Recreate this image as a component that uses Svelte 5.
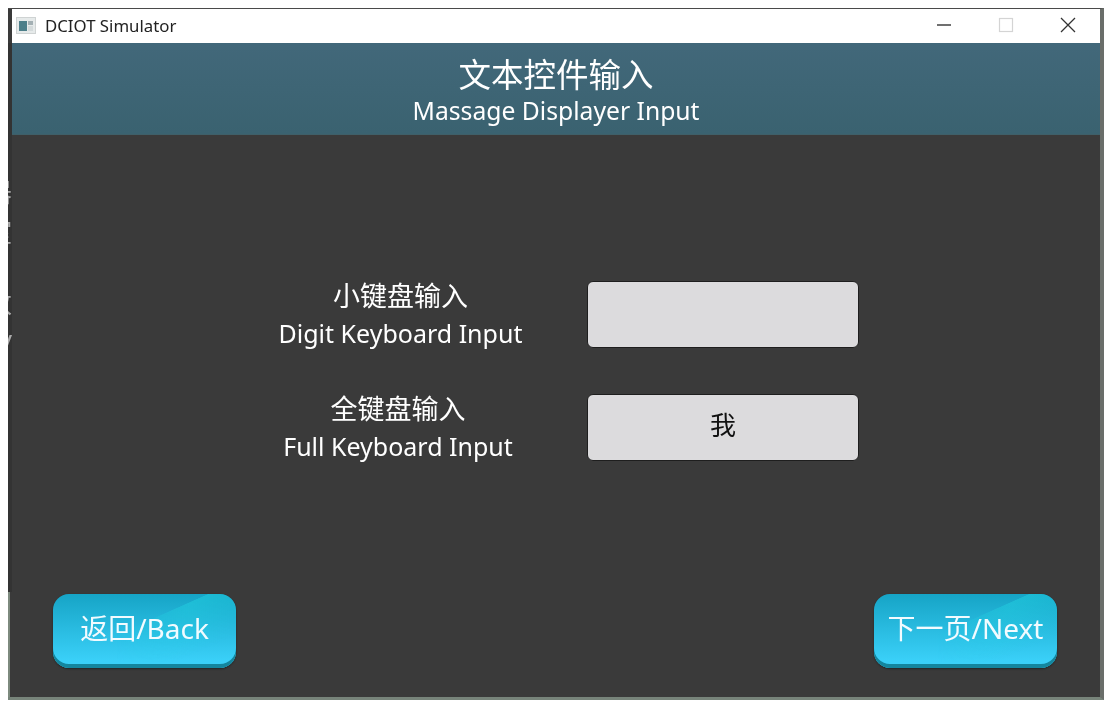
<script>
  const rows = [
    { zh: '小键盘输入', en: 'Digit Keyboard Input', value: '', cls: 'digit' },
    { zh: '全键盘输入', en: 'Full Keyboard Input', value: '我', cls: 'full' }
  ]
</script>

<div class="window">
  <div class="titlebar">
    <svg class="appicon" width="20" height="17" viewBox="0 0 20 17">
      <rect x="0.5" y="0.5" width="19" height="16" fill="#e6eaea" stroke="#cfd3d3" />
      <rect x="3" y="4" width="8" height="10" fill="#4d7f8a" />
      <rect x="12" y="4" width="5" height="4" fill="#a4b0b4" />
      <rect x="12" y="9" width="5" height="5" fill="#d4dadb" />
    </svg>
    <span class="apptitle">DCIOT Simulator</span>
    <div class="winbtns">
      <svg class="winbtn" width="16" height="16" viewBox="0 0 16 16"><path d="M1 8h14" stroke="#333" stroke-width="1.4" /></svg>
      <svg class="winbtn" width="16" height="16" viewBox="0 0 16 16"><rect x="1.5" y="1.5" width="13" height="13" fill="none" stroke="#d4d4d4" stroke-width="1.2" /></svg>
      <svg class="winbtn" width="16" height="16" viewBox="0 0 16 16"><path d="M1 1l14 14M15 1L1 15" stroke="#333" stroke-width="1.3" /></svg>
    </div>
  </div>

  <div class="body">
    <div class="ghost" aria-hidden="true">
      <span class="g1">器</span>
      <span class="g2">室</span>
      <span class="g3">数</span>
      <span class="g4">y</span>
    </div>
    <div class="edge"></div>

    <header class="header">
      <div class="h-zh">文本控件输入</div>
      <div class="h-en">Massage Displayer Input</div>
    </header>

    <main class="content">
      <div class="form">
        {#each rows as row}
          <div class="label {row.cls}">
            <div class="l-zh">{row.zh}</div>
            <div class="l-en">{row.en}</div>
          </div>
          <div class="field">{row.value}</div>
        {/each}
      </div>

      <div class="actions">
        <button class="btn">返回/Back</button>
        <button class="btn next">下一页/Next</button>
      </div>
    </main>
  </div>
</div>

<style>
  :global(body) {
    margin: 0;
    background: #fff;
  }

  .window {
    width: 1096px;
    height: 692px;
    margin: 8px 0 0 8px;
    display: flex;
    flex-direction: column;
    box-sizing: border-box;
    border-top: 1px solid #4a4a4a;
    border-right: 4px solid #6a6e6a;
    border-bottom: 3px solid #77847a;
    background: #3a3a3a;
    font-family: "Noto Sans", "Noto Sans CJK SC", sans-serif;
    color: #fff;
    filter: blur(0.4px);
  }

  .titlebar {
    height: 34px;
    margin-left: 4px;
    flex-shrink: 0;
    display: flex;
    align-items: center;
    background: #fff;
    color: #222;
    padding: 0 0 2px 4px;
    box-sizing: border-box;
  }

  .appicon {
    flex-shrink: 0;
  }

  .apptitle {
    margin-left: 9px;
    font-size: 16.8px;
  }

  .winbtns {
    margin-left: auto;
    display: flex;
    gap: 46px;
    padding-right: 24px;
  }

  .body {
    flex: 1;
    position: relative;
    display: flex;
    flex-direction: column;
    min-height: 0;
  }

  .ghost {
    position: absolute;
    left: 0;
    top: 0;
    bottom: 105px;
    width: 4px;
    overflow: hidden;
    background: #333;
    color: #aaa;
    font-size: 26px;
    line-height: 1;
  }

  .ghost span {
    position: absolute;
    right: 0;
  }

  .g1 { top: 136px; }
  .g2 { top: 176px; }
  .g3 { top: 247px; }
  .g4 { top: 283px; }

  .edge {
    position: absolute;
    left: 0;
    bottom: 0;
    height: 105px;
    width: 2px;
    background: #7d8a7e;
  }

  .header {
    height: 92px;
    margin-left: 4px;
    flex-shrink: 0;
    display: flex;
    flex-direction: column;
    align-items: center;
    padding-top: 12px;
    box-sizing: border-box;
    background: linear-gradient(#42687a, #3a6270);
    border-bottom: 1px solid #3f5f68;
  }

  .h-zh {
    font-size: 32.5px;
    line-height: 40px;
  }

  .h-en {
    font-size: 24.7px;
    line-height: 32px;
  }

  .content {
    flex: 1;
    display: flex;
    flex-direction: column;
    justify-content: space-between;
    padding: 146px 43px 29px 45px;
    min-height: 0;
  }

  .form {
    display: grid;
    grid-template-columns: 245px 272px;
    grid-auto-rows: 67px;
    justify-content: start;
    row-gap: 46px;
    column-gap: 64px;
    margin-left: 225px;
  }

  .label {
    text-align: center;
    display: flex;
    flex-direction: column;
    justify-content: center;
  }

  .label.full {
    padding: 0 5px 1px 0;
    box-sizing: border-box;
  }

  .l-zh {
    font-size: 27px;
    line-height: 37px;
  }

  .l-en {
    font-size: 25px;
    line-height: 38px;
  }

  .field {
    background: #dcdbdd;
    border: 1.5px solid #1e1e1e;
    border-radius: 6px;
    color: #111;
    font-size: 26px;
    line-height: 1;
    padding-bottom: 5px;
    box-sizing: border-box;
    display: flex;
    align-items: center;
    justify-content: center;
  }

  .actions {
    display: flex;
    justify-content: space-between;
  }

  .btn {
    position: relative;
    isolation: isolate;
    width: 183px;
    height: 74px;
    padding: 0 0 9px;
    border: none;
    border-radius: 16px;
    color: #f2fbff;
    font-family: inherit;
    font-size: 28px;
    background: linear-gradient(#16a4c6, #3ad0f8 90%);
    box-shadow: inset 0 -4px 0 #14869e, 0 1px 2px rgba(0, 0, 0, 0.4);
  }

  /* lighter wedge in the top right corner */
  .btn::before {
    content: "";
    position: absolute;
    inset: 0 0 6px 0;
    z-index: -1;
    border-radius: 16px 16px 0 0;
    background: linear-gradient(156deg, transparent 46%, rgba(36, 214, 228, 0.45) 46.5%, transparent 82%);
    mask-image: linear-gradient(to right, transparent 35%, #000 75%);
  }
</style>
